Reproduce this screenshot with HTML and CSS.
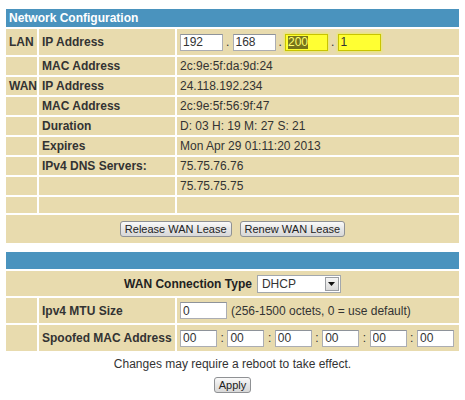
FILE: index.html
```html
<!DOCTYPE html>
<html>
<head>
<meta charset="utf-8">
<title>Network Configuration</title>
<link rel="stylesheet" href="styles.css">
</head>
<body>
<div class="page">
  <table class="grid">
    <colgroup><col class="c1"><col class="c2"><col class="c3"></colgroup>
    <tr class="head"><td colspan="3">Network Configuration</td></tr>
    <tr class="h26">
      <td class="lbl">LAN</td>
      <td class="lbl">IP Address</td>
      <td>
        <div class="fields">
          <input class="box ip" type="text" value="192">
          <span class="sep ipsep">.</span>
          <input class="box ip" type="text" value="168">
          <span class="sep ipsep">.</span>
          <span class="box ip hl"><mark class="sel">200</mark></span>
          <span class="sep ipsep">.</span>
          <input class="box ip hl" type="text" value="1">
        </div>
      </td>
    </tr>
    <tr><td></td><td class="lbl">MAC Address</td><td>2c:9e:5f:da:9d:24</td></tr>
    <tr><td class="lbl">WAN</td><td class="lbl">IP Address</td><td>24.118.192.234</td></tr>
    <tr><td></td><td class="lbl">MAC Address</td><td>2c:9e:5f:56:9f:47</td></tr>
    <tr><td></td><td class="lbl">Duration</td><td>D: 03 H: 19 M: 27 S: 21</td></tr>
    <tr><td></td><td class="lbl">Expires</td><td>Mon Apr 29 01:11:20 2013</td></tr>
    <tr><td></td><td class="lbl">IPv4 DNS Servers:</td><td>75.75.76.76</td></tr>
    <tr><td></td><td></td><td>75.75.75.75</td></tr>
    <tr class="h16"><td></td><td></td><td></td></tr>
    <tr class="h28">
      <td colspan="3">
        <div class="btnrow">
          <button class="btn" type="button">Release WAN Lease</button>
          <button class="btn" type="button">Renew WAN Lease</button>
        </div>
      </td>
    </tr>
  </table>

  <table class="grid second">
    <colgroup><col class="c1"><col class="c2"><col class="c3"></colgroup>
    <tr class="head h17"><td colspan="3"></td></tr>
    <tr class="h25">
      <td colspan="3">
        <div class="conn">
          <span class="lbl">WAN Connection Type</span>
          <div class="select">
            <span class="seltext">DHCP</span>
            <span class="arrow"><svg width="7" height="4" viewBox="0 0 7 4"><path d="M0 0H7L3.5 4Z" fill="#111"/></svg></span>
          </div>
        </div>
      </td>
    </tr>
    <tr class="h25">
      <td></td>
      <td class="lbl">Ipv4 MTU Size</td>
      <td>
        <div class="fields">
          <input class="box mtu" type="text" value="0">
          <span class="hint">(256-1500 octets, 0 = use default)</span>
        </div>
      </td>
    </tr>
    <tr class="h26">
      <td></td>
      <td class="lbl">Spoofed MAC Address</td>
      <td>
        <div class="fields">
          <input class="box mac" type="text" value="00">
          <span class="sep macsep">:</span>
          <input class="box mac" type="text" value="00">
          <span class="sep macsep">:</span>
          <input class="box mac" type="text" value="00">
          <span class="sep macsep">:</span>
          <input class="box mac" type="text" value="00">
          <span class="sep macsep">:</span>
          <input class="box mac" type="text" value="00">
          <span class="sep macsep">:</span>
          <input class="box mac" type="text" value="00">
        </div>
      </td>
    </tr>
  </table>

  <p class="note">Changes may require a reboot to take effect.</p>
  <div class="apply"><button class="btn" type="button">Apply</button></div>
</div>
</body>
</html>
```

FILE: styles.css
```css
body {
  margin: 0;
  background: #ffffff;
  font-family: "Liberation Sans", Arial, sans-serif;
}

.page {
  padding: 7px 4px 0;
}

.grid {
  border-collapse: separate;
  border-spacing: 2px;
  width: 457px;
  table-layout: fixed;
}

.c1 { width: 31px; }
.c2 { width: 136px; }
.c3 { width: 282px; }

.grid td {
  background: #e8dbae;
  padding: 0 0 0 3px;
  height: 18px;
  font-size: 12px;
  line-height: 14px;
  color: #333333;
  white-space: nowrap;
  overflow: hidden;
}

.grid .head td {
  background: #4a93be;
  color: #ffffff;
  font-weight: bold;
}

.grid .h16 td { height: 16px; }
.grid .h17 td { height: 17px; }
.grid .h25 td { height: 25px; }
.grid .h26 td { height: 26px; }
.grid .h28 td { height: 28px; }

.lbl {
  font-weight: bold;
  color: #222222;
}

.second {
  margin-top: 5px;
}

.fields {
  display: flex;
  align-items: center;
}

.box {
  box-sizing: border-box;
  height: 17px;
  margin: 0;
  padding: 0 2px;
  border: 1px solid #abadb3;
  border-top-color: #8e939a;
  background: #ffffff;
  font-family: "Liberation Sans", Arial, sans-serif;
  font-size: 12px;
  color: #333333;
  outline: none;
}

span.box {
  display: flex;
  align-items: center;
}

.ip { width: 43px; }
.mtu { width: 47px; }
.mac { width: 37px; }

.hl {
  background: #ffff33;
  border-color: #c9c400;
  box-shadow: 0 0 2px 1px #eaea70;
}

.sel {
  background: #77751a;
  color: #ffff70;
  line-height: 13px;
}

.sep {
  text-align: center;
  color: #333333;
  font-size: 12px;
}

.ipsep { width: 9.5px; }
.macsep { width: 10.4px; }

.hint {
  margin-left: 4px;
}

.btnrow {
  display: flex;
  justify-content: center;
  gap: 8px;
  margin-left: -3px;
}

.btn {
  box-sizing: border-box;
  height: 16px;
  margin: 0;
  padding: 0 4px;
  border: 1px solid #8f9194;
  border-radius: 3px;
  background: linear-gradient(#fafafa, #e6e6e6 50%, #d8d8d8);
  font-family: "Liberation Sans", Arial, sans-serif;
  font-size: 11px;
  line-height: 13px;
  color: #222222;
}

.conn {
  display: flex;
  justify-content: center;
  align-items: center;
  gap: 5px;
  margin-left: -3px;
}

.select {
  box-sizing: border-box;
  width: 84px;
  height: 18px;
  display: flex;
  align-items: center;
  border: 1px solid #a3a8ad;
  background: #ffffff;
}

.seltext {
  flex: 1;
  padding-left: 4px;
  font-size: 12px;
  color: #333333;
}

.arrow {
  box-sizing: border-box;
  width: 14px;
  height: 14px;
  margin-right: 1px;
  display: flex;
  align-items: center;
  justify-content: center;
  border: 1px solid #9a9da1;
  background: linear-gradient(#f6f6f6, #dadada);
}

.note {
  margin: 4px 0 0;
  text-align: center;
  font-size: 12px;
  line-height: 14px;
  color: #333333;
}

.apply {
  display: flex;
  justify-content: center;
  margin-top: 6px;
}
```
